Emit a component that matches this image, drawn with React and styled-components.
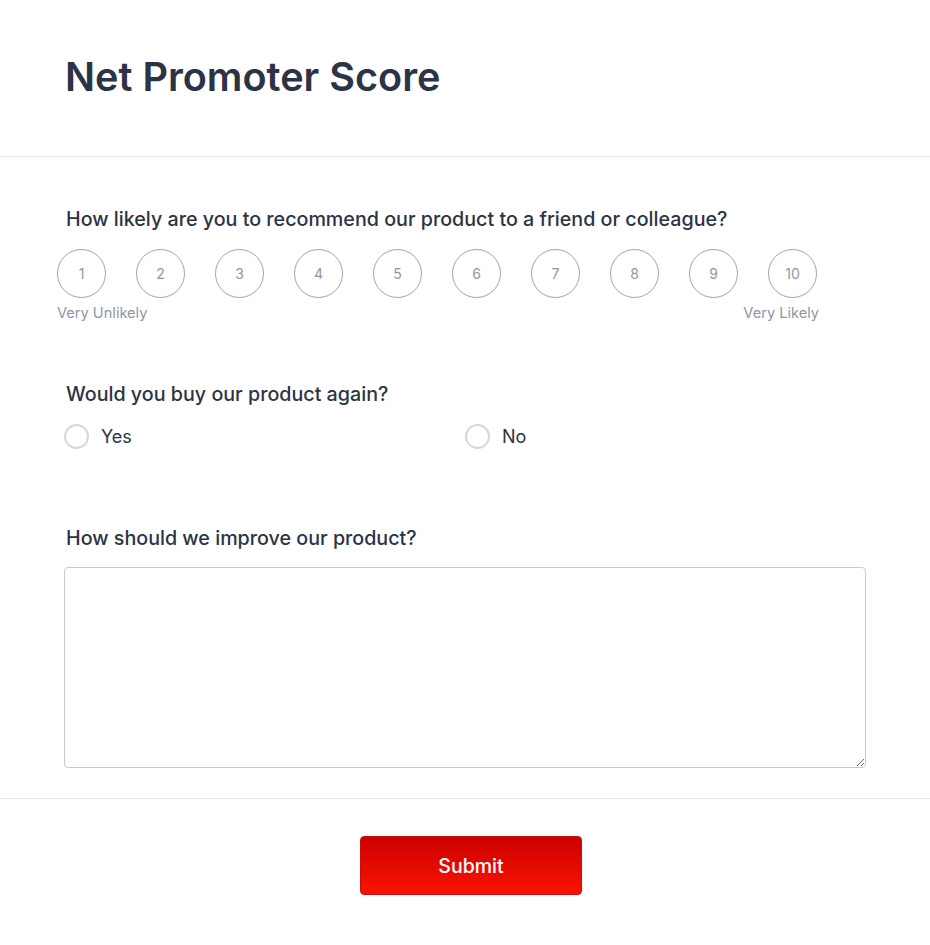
import React, { useState } from 'react'
import styled, { createGlobalStyle } from 'styled-components'

const GlobalStyle = createGlobalStyle`
  html, body {
    margin: 0;
    padding: 0;
    background: #fff;
  }
  body {
    font-family: Inter, "Noto Sans", sans-serif;
    color: #2c3345;
  }
  * {
    box-sizing: border-box;
  }
`

const Page = styled.div`
  width: 930px;
  min-height: 945px;
  background: #fff;
`
const Header = styled.div`
  padding: 53px 65px 55px;
  border-bottom: 1px solid #e3e5ea;
`
const Title = styled.h1`
  margin: 0;
  font-size: 39.6px;
  line-height: 48px;
  font-weight: 600;
  color: #2c3345;
`
const Body = styled.div`
  padding: 50px 65px 0;
`
const Question = styled.div`
  margin-bottom: ${({ gap }) => gap}px;
`
const Label = styled.div`
  font-size: 19.7px;
  line-height: 24px;
  font-weight: 500;
  color: #2c3345;
  margin: 0 0 ${({ below }) => below}px 1px;
`
const Scale = styled.div`
  display: inline-flex;
  flex-direction: column;
  margin-left: -8px;
`
const Circles = styled.div`
  display: flex;
  gap: 30px;
`
const Circle = styled.button`
  width: 49px;
  height: 49px;
  border-radius: 50%;
  border: 1px solid ${({ active }) => (active ? '#2e69ff' : '#9aa3b9')};
  background: ${({ active }) => (active ? '#2e69ff' : '#fff')};
  color: ${({ active }) => (active ? '#fff' : '#8e97ad')};
  font-family: Inter, sans-serif;
  font-size: 14px;
  display: flex;
  align-items: center;
  justify-content: center;
  padding: 0;
  cursor: pointer;
`
const ScaleLabels = styled.div`
  display: flex;
  justify-content: space-between;
  margin: 6px -2px 0 0;
  font-size: 14.6px;
  line-height: 18px;
  color: #8d96a9;
`
const RadioRow = styled.div`
  display: grid;
  grid-template-columns: 401px 1fr;
  margin-left: -1px;
`
const RadioOption = styled.label`
  display: flex;
  align-items: center;
  gap: 12px;
  font-size: 18px;
  line-height: 24px;
  color: #2c3345;
  cursor: pointer;
`
const RadioDot = styled.span`
  width: 25px;
  height: 25px;
  border-radius: 50%;
  border: 2px solid ${({ checked }) => (checked ? '#2e69ff' : '#d3d7e0')};
  background: #fff;
  display: flex;
  align-items: center;
  justify-content: center;
  &::after {
    content: '';
    width: 11px;
    height: 11px;
    border-radius: 50%;
    background: ${({ checked }) => (checked ? '#2e69ff' : 'transparent')};
  }
`
const TextArea = styled.textarea`
  display: block;
  width: 802px;
  height: 201px;
  margin-left: -1px;
  border: 1px solid #c3cad8;
  border-radius: 4px;
  padding: 10px;
  font-family: Inter, sans-serif;
  font-size: 16px;
  color: #2c3345;
  outline: none;
`
const Footer = styled.div`
  margin-top: 30px;
  border-top: 1px solid #e4e8f1;
  display: flex;
  justify-content: center;
  padding: 37px 0 50px 12px;
`
const SubmitButton = styled.button`
  width: 222px;
  height: 59px;
  border: 1px solid #c40f0f;
  border-radius: 4px;
  background: linear-gradient(180deg, #cc0000 0%, #fa1400 100%);
  color: #fff;
  font-family: Inter, sans-serif;
  font-size: 19.5px;
  font-weight: 500;
  cursor: pointer;
`

export default function App() {
  const [score, setScore] = useState(null)
  const [again, setAgain] = useState(null)
  return (
    <Page>
      <GlobalStyle />
      <Header>
        <Title>Net Promoter Score</Title>
      </Header>
      <Body>
        <Question gap={60}>
          <Label below={18}>How likely are you to recommend our product to a friend or colleague?</Label>
          <Scale>
            <Circles>
              {[1, 2, 3, 4, 5, 6, 7, 8, 9, 10].map((n) => (
                <Circle key={n} active={score === n} onClick={() => setScore(n)}>
                  {n}
                </Circle>
              ))}
            </Circles>
            <ScaleLabels>
              <span>Very Unlikely</span>
              <span>Very Likely</span>
            </ScaleLabels>
          </Scale>
        </Question>
        <Question gap={77}>
          <Label below={18}>Would you buy our product again?</Label>
          <RadioRow>
            {['Yes', 'No'].map((opt) => (
              <RadioOption key={opt} onClick={() => setAgain(opt)}>
                <RadioDot checked={again === opt} />
                {opt}
              </RadioOption>
            ))}
          </RadioRow>
        </Question>
        <Question gap={0}>
          <Label below={17}>How should we improve our product?</Label>
          <TextArea />
        </Question>
      </Body>
      <Footer>
        <SubmitButton>Submit</SubmitButton>
      </Footer>
    </Page>
  )
}
